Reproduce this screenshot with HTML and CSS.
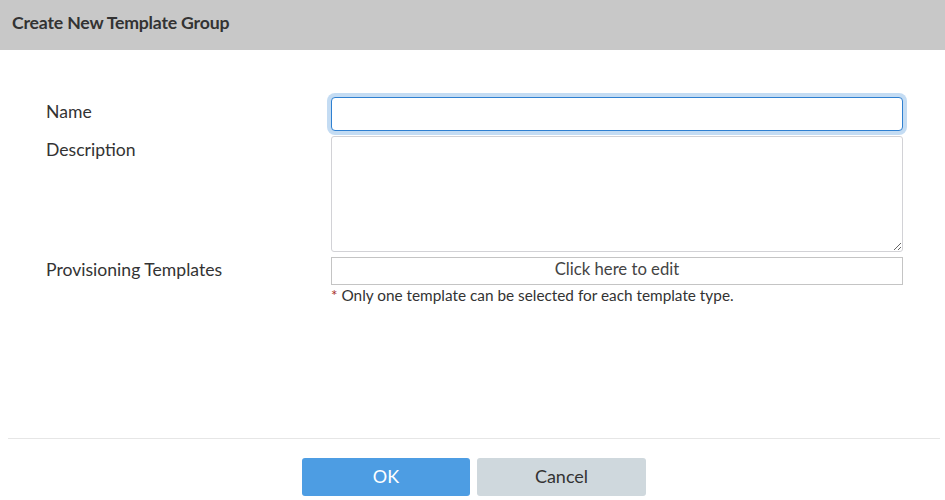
FILE: index.html
```html
<!DOCTYPE html>
<html>
<head>
<meta charset="utf-8">
<link rel="stylesheet" href="styles.css">
</head>
<body>
<div class="dialog">
  <div class="header">Create New Template Group</div>
  <div class="body">
    <div class="form">
      <div class="label label-name">Name</div>
      <div class="field"><input class="input input-focus" type="text"></div>
      <div class="label label-desc">Description</div>
      <div class="field"><textarea class="textarea"></textarea></div>
      <div class="label label-prov">Provisioning Templates</div>
      <div class="field">
        <div class="edit-box">Click here to edit</div>
        <div class="note"><span class="star">*</span> Only one template can be selected for each template type.</div>
      </div>
    </div>
  </div>
  <div class="footer">
    <button class="btn btn-ok">OK</button>
    <button class="btn btn-cancel">Cancel</button>
  </div>
</div>
</body>
</html>
```
FILE: styles.css
```css
html, body {
  margin: 0;
  padding: 0;
  background: #fff;
}
body {
  font-family: Lato, "Open Sans", sans-serif;
  color: #333;
}
.dialog {
  width: 945px;
  height: 500px;
  display: flex;
  flex-direction: column;
}
.header {
  height: 50px;
  background: #c8c8c8;
  box-sizing: border-box;
  padding: 12px 0 0 12px;
  font-size: 17.7px;
  font-weight: bold;
  color: #333;
  letter-spacing: -0.2px;
}
.body {
  height: 388px;
  box-sizing: border-box;
  padding: 47px 0 0 46px;
}
.form {
  display: grid;
  grid-template-columns: 285px 572px;
  row-gap: 5px;
}
.label {
  font-size: 17.6px;
  line-height: 20px;
  color: #333;
}
.label-name { padding-top: 5px; }
.label-desc { padding-top: 4px; }
.label-prov { padding-top: 3px; }
.field {
  display: flex;
  flex-direction: column;
}
.input {
  box-sizing: border-box;
  width: 572px;
  height: 34px;
  margin: 0;
  border: 1px solid #2f80d1;
  border-radius: 4px;
  outline: none;
  font-family: inherit;
  font-size: 15px;
  padding: 0 8px;
}
.input-focus {
  box-shadow: 0 0 0 4px #c4dcf3;
}
.textarea {
  box-sizing: border-box;
  width: 572px;
  height: 116px;
  margin: 0;
  border: 1px solid #d2d2d6;
  border-radius: 3px;
  font-family: inherit;
  font-size: 15px;
  padding: 6px 8px;
  resize: vertical;
  outline: none;
}
.edit-box {
  box-sizing: border-box;
  width: 572px;
  height: 28px;
  border: 1px solid #c4c4c4;
  text-align: center;
  font-size: 16.7px;
  line-height: 23px;
  color: #444;
}
.note {
  font-size: 15.35px;
  color: #333;
  margin-top: 0;
  line-height: 20px;
}
.star {
  color: #a8322d;
}
.footer {
  border-top: 1px solid #e6e6e6;
  margin: 0 5px 0 8px;
  display: flex;
  justify-content: center;
  padding: 19px 0 0 0;
  gap: 7px;
}
.btn {
  width: 168px;
  height: 38px;
  border: none;
  border-radius: 3px;
  font-family: Lato, sans-serif;
  font-size: 18px;
  padding: 0 0 3px 0;
  margin: 0;
}
.btn-ok {
  background: #4d9de3;
  color: #fff;
}
.btn-cancel {
  width: 169px;
  background: #cfd8dd;
  color: #333;
}
```
